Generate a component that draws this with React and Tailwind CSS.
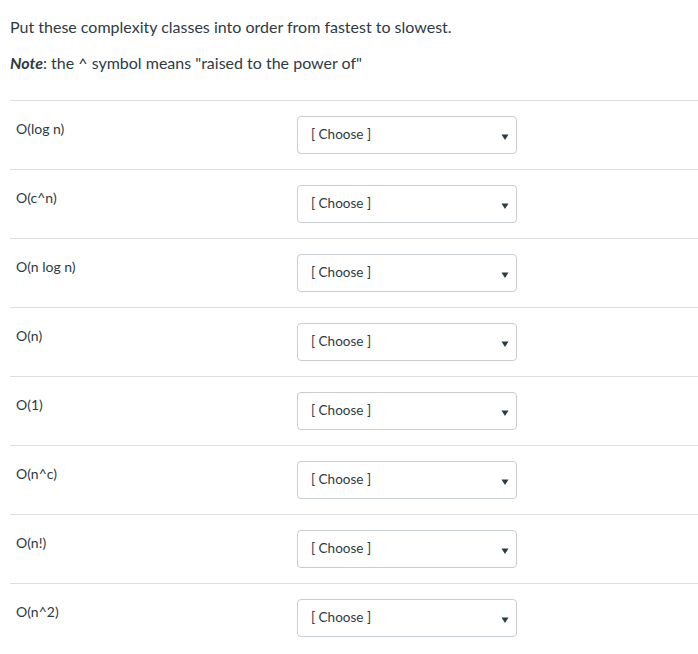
const rows = ['O(log n)', 'O(c^n)', 'O(n log n)', 'O(n)', 'O(1)', 'O(n^c)', 'O(n!)', 'O(n^2)'];

function ChooseSelect() {
  return (
    <div className="w-[220px] h-[38px] border border-[#c7cdd1] rounded-[4px] bg-white flex items-center justify-between pl-[13px] pr-[7px]">
      <span className="text-[13.5px] leading-[16px] mb-[3px] text-[#2d3b45]">[ Choose ]</span>
      <svg width="8" height="8" viewBox="0 0 8 8" className="mt-[3px]">
        <path d="M0.5 1.5 L7.5 1.5 L4 7 Z" fill="#2d3b45" />
      </svg>
    </div>
  );
}

export default function App() {
  return (
    <div className="w-[698px] min-h-[654px] bg-white text-[#2d3b45] font-['Lato','Liberation_Sans',sans-serif]">
      <div className="pl-[10px] pt-[17px]">
        <p className="text-[16px] leading-[20px]">Put these complexity classes into order from fastest to slowest.</p>
        <p className="text-[16px] leading-[20px] mt-[16px]">
          <strong className="italic font-bold">Note</strong>: the ^ symbol means "raised to the power of"
        </p>
      </div>
      <div className="ml-[10px] mt-[27px]">
        {rows.map((r) => (
          <div key={r} className="border-t border-[#dcdfe2] h-[69px] flex items-start">
            <div className="w-[287px] pl-[6px] pt-[19px] text-[14px] leading-[18px]">{r}</div>
            <div className="pt-[15px]">
              <ChooseSelect />
            </div>
          </div>
        ))}
      </div>
    </div>
  );
}
